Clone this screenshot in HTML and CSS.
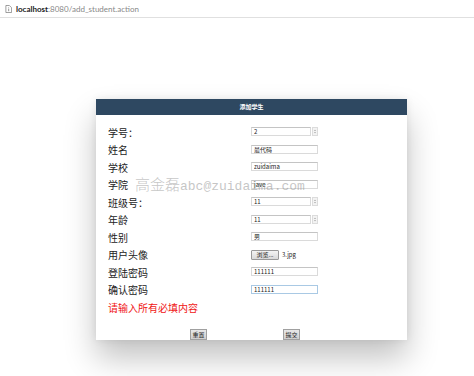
FILE: index.html
```html
<!DOCTYPE html>
<html lang="zh">
	<head>
		<meta charset="UTF-8" />
		<meta name="viewport" content="width=device-width, initial-scale=1.0" />
		<title>添加学生</title>
		<link rel="stylesheet" href="styles.css">
	</head>

	<body>
		<!--browser address bar-->
		<div class="address">
			<svg class="address__icon" viewBox="0 0 8 9" aria-hidden="true">
				<path d="M1,0.5 H5 L7.5,3 V8.5 H1 Z" fill="none" stroke="#777" stroke-width="0.8" />
				<path d="M4.2,4 V7" stroke="#777" stroke-width="0.9" />
				<circle cx="4.2" cy="2.7" r="0.5" fill="#777" />
			</svg>
			<span class="address__host">localhost</span><span class="address__path">:8080/add_student.action</span>
		</div>

		<div class="panel">
			<div class="panel__title">添加学生</div>

			<form class="form">
				<div class="row">
					<label class="row__label">学号：</label>
					<div class="field">
						<input class="input input--num" type="text" value="2" />
						<span class="spin">
							<svg viewBox="0 0 6 9" aria-hidden="true">
								<path d="M1.5,3.5 L3,2 L4.5,3.5 Z M1.5,5.5 L3,7 L4.5,5.5 Z" fill="#888" />
							</svg>
						</span>
					</div>
				</div>
				<div class="row">
					<label class="row__label">姓名</label>
					<div class="field"><input class="input" type="text" value="最代码" /></div>
				</div>
				<div class="row">
					<label class="row__label">学校</label>
					<div class="field"><input class="input" type="text" value="zuidaima" /></div>
				</div>
				<div class="row">
					<label class="row__label">学院</label>
					<div class="field"><input class="input" type="text" value="jave" /></div>
				</div>
				<div class="row">
					<label class="row__label">班级号：</label>
					<div class="field">
						<input class="input input--num" type="text" value="11" />
						<span class="spin">
							<svg viewBox="0 0 6 9" aria-hidden="true">
								<path d="M1.5,3.5 L3,2 L4.5,3.5 Z M1.5,5.5 L3,7 L4.5,5.5 Z" fill="#888" />
							</svg>
						</span>
					</div>
				</div>
				<div class="row">
					<label class="row__label">年龄</label>
					<div class="field">
						<input class="input input--num" type="text" value="11" />
						<span class="spin">
							<svg viewBox="0 0 6 9" aria-hidden="true">
								<path d="M1.5,3.5 L3,2 L4.5,3.5 Z M1.5,5.5 L3,7 L4.5,5.5 Z" fill="#888" />
							</svg>
						</span>
					</div>
				</div>
				<div class="row">
					<label class="row__label">性别</label>
					<div class="field"><input class="input" type="text" value="男" /></div>
				</div>
				<div class="row">
					<label class="row__label">用户头像</label>
					<div class="field">
						<span class="browse">浏览...</span>
						<span class="file-name">3.jpg</span>
					</div>
				</div>
				<div class="row">
					<label class="row__label">登陆密码</label>
					<div class="field"><input class="input" type="text" value="111111" /></div>
				</div>
				<div class="row">
					<label class="row__label">确认密码</label>
					<div class="field"><input class="input input--focus" type="text" value="111111" /></div>
				</div>
				<div class="row">
					<span class="row__error">请输入所有必填内容</span>
				</div>

				<div class="actions">
					<button class="btn" type="reset">重置</button>
					<button class="btn" type="button">提交</button>
				</div>
			</form>
		</div>

		<!--watermark lies over the form-->
		<div class="watermark"><span class="watermark__cjk">高金磊</span><span class="watermark__latin">abc@zuidaima.com</span></div>
	</body>
</html>
```

FILE: styles.css
```css
body {
	margin: 0;
	background-color: #fff;
	font-family: "Noto Sans CJK SC", "Noto Sans", sans-serif;
	color: #222;
	position: relative;
	height: 376px;
	overflow: hidden;
}
.address {
	height: 17px;
	border-bottom: 1px solid #e0e0e0;
	display: flex;
	align-items: center;
	padding-left: 5px;
	font-family: Lato, "Noto Sans", sans-serif;
	font-size: 8px;
}
.address__icon {
	width: 7px;
	height: 8px;
	margin-right: 4px;
}
.address__host {
	color: #222;
	font-weight: bold;
}
.address__path {
	color: #888;
}
.panel {
	width: 311px;
	margin: 81px 0 0 96px;
	background: #fff;
	box-shadow: 0 18px 30px rgba(0, 0, 0, 0.24), 0 0 8px rgba(0, 0, 0, 0.08);
}
.panel__title {
	height: 16px;
	line-height: 16px;
	background: #2e4861;
	color: #fff;
	text-align: center;
	font-size: 6px;
	font-weight: bold;
}
.form {
	padding: 8px 0 0 12px;
}
.row {
	display: grid;
	grid-template-columns: 143px auto;
	align-items: center;
	height: 17.5px;
}
.row__label {
	font-size: 10px;
	line-height: 1;
	padding-top: 2px;
}
.row__error {
	grid-column: 1 / 3;
	font-size: 10px;
	line-height: 1;
	padding-top: 2px;
	color: #f01414;
}
.field {
	display: flex;
	align-items: center;
}
.input {
	box-sizing: border-box;
	width: 67px;
	height: 9px;
	padding: 0 2px;
	border: 1px solid #dadada;
	border-top-color: #c4c4c4;
	font-family: "Noto Sans CJK SC", "Noto Sans", sans-serif;
	font-size: 6px;
	color: #222;
	background: #fff;
	outline: none;
}
.input--num {
	width: 60px;
}
.input--focus {
	border-color: #a9c9e4;
}
.spin {
	width: 6px;
	height: 9px;
	margin-left: 1px;
	box-sizing: border-box;
	border: 1px solid #dcdcdc;
	background: #f3f3f3;
	display: flex;
}
.spin svg {
	width: 100%;
	height: 100%;
}
.browse {
	box-sizing: border-box;
	width: 28px;
	height: 10px;
	line-height: 8px;
	border: 1px solid #999;
	border-radius: 1px;
	background: linear-gradient(#f4f4f4, #d9d9d9);
	font-size: 6px;
	text-align: center;
	margin-top: 1px;
}
.file-name {
	font-size: 6px;
	margin-left: 3px;
}
.actions {
	display: flex;
	gap: 76px;
	padding: 13px 0 0 82px;
	height: 11px;
}
.btn {
	box-sizing: border-box;
	width: 17px;
	height: 11px;
	padding: 0;
	border: 1px solid #a0a0a0;
	background: linear-gradient(#e8e8e8, #cfcfcf);
	font-family: "Noto Sans CJK SC", sans-serif;
	font-size: 6px;
	line-height: 9px;
	color: #222;
}
.watermark {
	position: absolute;
	left: 135px;
	top: 173px;
	color: rgba(140, 140, 140, 0.5);
	white-space: nowrap;
	line-height: 20px;
}
.watermark__cjk {
	font-family: "Noto Sans CJK SC", serif;
	font-size: 15px;
	font-weight: 300;
}
.watermark__latin {
	font-family: "Liberation Mono", monospace;
	font-size: 13px;
}
```
